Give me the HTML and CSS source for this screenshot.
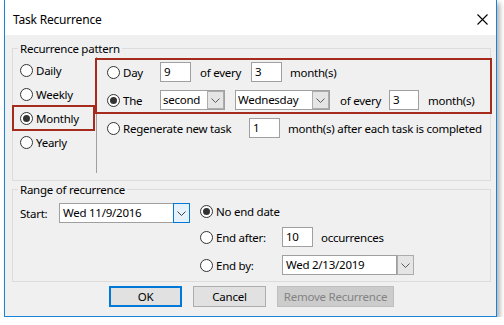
FILE: index.html
```html
<!DOCTYPE html>
<html>
<head>
<meta charset="utf-8">
<link rel="stylesheet" href="styles.css">
</head>
<body>
<div class="window">
  <div class="titlebar">
    <span class="title">Task Recurrence</span>
    <svg class="close" width="11" height="11" viewBox="0 0 11 11"><path d="M0.5 0.5 L10.5 10.5 M10.5 0.5 L0.5 10.5" stroke="#000" stroke-width="1.1" fill="none"/></svg>
  </div>
  <div class="content">
    <fieldset class="group pattern">
      <legend>Recurrence pattern</legend>
      <div class="pattern-body">
        <div class="freq">
          <div class="opt"><span class="radio"></span>Daily</div>
          <div class="opt"><span class="radio"></span>Weekly</div>
          <div class="opt"><span class="radio on"></span>Monthly</div>
          <div class="opt"><span class="radio"></span>Yearly</div>
        </div>
        <div class="monthly">
          <div class="mrow">
            <span class="radio"></span><span class="lbl w37">Day</span>
            <span class="tb">9</span>
            <span class="txt ml9 w51">of every</span>
            <span class="tb">3</span>
            <span class="txt ml8">month(s)</span>
          </div>
          <div class="mrow">
            <span class="radio on"></span><span class="lbl w37">The</span>
            <span class="sel w65"><span class="val">second</span><span class="dd"><svg width="9" height="5" viewBox="0 0 9 5"><polyline points="0.5,0.5 4.5,4.5 8.5,0.5" fill="none" stroke="#5a5a5a" stroke-width="1"/></svg></span></span>
            <span class="sel w95 ml10"><span class="val">Wednesday</span><span class="dd"><svg width="9" height="5" viewBox="0 0 9 5"><polyline points="0.5,0.5 4.5,4.5 8.5,0.5" fill="none" stroke="#5a5a5a" stroke-width="1"/></svg></span></span>
            <span class="txt ml10 w49">of every</span>
            <span class="tb w30">3</span>
            <span class="txt ml9">month(s)</span>
          </div>
          <div class="mrow r3">
            <span class="radio"></span><span class="lbl w126">Regenerate new task</span>
            <span class="tb">1</span>
            <span class="txt ml8">month(s) after each task is completed</span>
          </div>
        </div>
      </div>
    </fieldset>
    <fieldset class="group range">
      <legend>Range of recurrence</legend>
      <div class="range-body">
        <div class="start">Start:</div>
        <div class="combo start-combo"><span class="field">Wed 11/9/2016</span><span class="dd focus"><svg width="9" height="5" viewBox="0 0 9 5"><polyline points="0.5,0.5 4.5,4.5 8.5,0.5" fill="none" stroke="#404040" stroke-width="1"/></svg></span></div>
        <div class="ends">
          <div class="ropt e1"><span class="radio on"></span>No end date</div>
          <div class="ropt e2"><span class="radio"></span><span class="lbl w66">End after:</span><span class="tb">10</span><span class="txt ml8">occurrences</span></div>
          <div class="ropt"><span class="radio"></span><span class="lbl w66">End by:</span><span class="combo end-combo"><span class="field">Wed 2/13/2019</span><span class="dd"><svg width="9" height="5" viewBox="0 0 9 5"><polyline points="0.5,0.5 4.5,4.5 8.5,0.5" fill="none" stroke="#5a5a5a" stroke-width="1"/></svg></span></span></div>
        </div>
      </div>
    </fieldset>
    <div class="buttons">
      <span class="btn default">OK</span>
      <span class="btn">Cancel</span>
      <span class="btn disabled wide">Remove Recurrence</span>
    </div>
  </div>
  <div class="mark mark-freq"></div>
  <div class="mark mark-month"></div>
</div>
</body>
</html>
```

FILE: styles.css
```css
* { box-sizing: border-box; }
body {
  margin: 0;
  background: #fff;
  font-family: "Noto Sans", "Open Sans", sans-serif;
  font-size: 11.5px;
  letter-spacing: -0.25px;
  color: #000;
}
.window {
  position: relative;
  margin-left: 4px;
  width: 493px;
  height: 317px;
  border: 1px solid #1883d7;
  border-top: 0;
  background: #f0f0f0;
  box-shadow: 3px 3px 5px rgba(0,0,0,0.3);
}
.titlebar {
  height: 35px;
  background: #fff;
  display: flex;
  align-items: center;
  justify-content: space-between;
  padding: 4px 8px 0 8px;
}
.title { font-size: 12px; letter-spacing: -0.2px; }
.close { display: block; margin-top: -1px; }
.content { padding: 5px 5px 0 7px; }
fieldset.group {
  margin: 0;
  padding: 0;
  border: 1px solid #dcdcdc;
  min-width: 0;
}
legend {
  margin-left: 5px;
  padding: 0 2px;
  line-height: 17px;
}
.range { margin-top: 1px; }
.pattern-body { display: flex; height: 123px; }
.freq {
  flex: none;
  width: 84px;
  border-right: 1px solid #a0a0a0;
  padding: 1px 0 0 7px;
  margin-bottom: 7px;
}
.opt { display: flex; align-items: center; height: 24px; }
.radio {
  flex: none;
  position: relative;
  width: 13px;
  height: 13px;
  border: 1px solid #333;
  border-radius: 50%;
  background: #fff;
  margin-right: 3px;
}
.radio.on::after {
  content: "";
  position: absolute;
  left: 2px;
  top: 2px;
  width: 7px;
  height: 7px;
  border-radius: 50%;
  background: #333;
}
.monthly { flex: 1; min-width: 0; padding: 5px 0 0 10px; }
.mrow { display: flex; align-items: center; height: 20px; margin-bottom: 8px; }
.mrow.r3 { margin-top: 1px; }
.lbl, .txt { flex: none; white-space: nowrap; }
.w37 { width: 37px; }
.w51 { width: 51px; }
.w49 { width: 49px; }
.w66 { width: 66px; }
.w126 { width: 126px; }
.ml8 { margin-left: 8px; }
.ml9 { margin-left: 9px; }
.ml10 { margin-left: 10px; }
.tb {
  flex: none;
  width: 31px;
  height: 20px;
  border: 1px solid #a0a0a0;
  background: #fff;
  padding-left: 3px;
  line-height: 18px;
}
.tb.w30 { width: 30px; }
.sel {
  flex: none;
  display: flex;
  height: 20px;
  border: 1px solid #a0a0a0;
  background: #fff;
}
.sel.w65 { width: 65px; }
.sel.w95 { width: 95px; }
.sel .val { flex: 1; padding-left: 2px; line-height: 18px; }
.dd {
  flex: none;
  width: 17px;
  display: flex;
  align-items: center;
  justify-content: center;
  border: 1px solid #acacac;
  background: #e5e5e5;
}
.range-body { display: flex; height: 83px; }
.start {
  flex: none;
  width: 46px;
  padding-left: 7px;
  height: 20px;
  margin-top: 5px;
  display: flex;
  align-items: center;
}
.combo { display: flex; height: 20px; flex: none; }
.start-combo { width: 131px; margin-top: 5px; }
.end-combo { width: 132px; }
.combo .field {
  flex: 1;
  border: 1px solid #a0a0a0;
  background: #fff;
  padding-left: 3px;
  line-height: 18px;
  white-space: nowrap;
}
.start-combo .field { border-right: 0; }
.dd.focus { border-color: #0078d7; background: #e5f1fb; }
.ends { flex: none; margin-left: 10px; padding-top: 3px; }
.ropt { display: flex; align-items: center; height: 20px; }
.ropt.e1 { margin-bottom: 6px; }
.ropt.e2 { margin-bottom: 8px; }
.buttons { display: flex; gap: 11px; padding-left: 97px; margin-top: 4px; }
.btn {
  flex: none;
  width: 73px;
  height: 21px;
  border: 1px solid #adadad;
  background: #e1e1e1;
  display: flex;
  align-items: center;
  justify-content: center;
  white-space: nowrap;
}
.btn.default { border: 2px solid #0078d7; }
.btn.wide { width: 117px; }
.btn.disabled { background: #cccccc; border-color: #bfbfbf; color: #838383; }
.mark {
  position: absolute;
  border: 2px solid #a52c1c;
}
.mark-freq { left: 7px; top: 105px; width: 83px; height: 26px; }
.mark-month { left: 90px; top: 58px; width: 397px; height: 56px; }
```
